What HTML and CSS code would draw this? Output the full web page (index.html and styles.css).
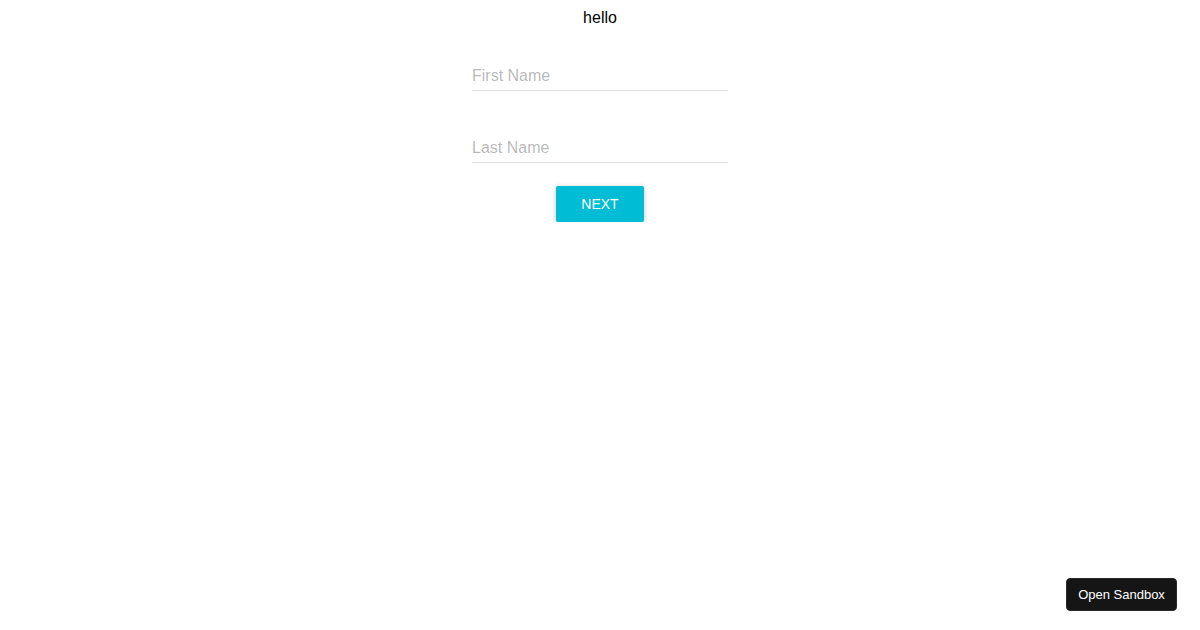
FILE: index.html
```html
<!DOCTYPE html>
<html>
<head>
<meta charset="utf-8">
<link rel="stylesheet" href="styles.css">
</head>
<body>
<div class="page">
  <div class="title">hello</div>
  <form class="form">
    <input class="field field-first" type="text" placeholder="First Name">
    <input class="field field-last" type="text" placeholder="Last Name">
    <button class="next" type="button">Next</button>
  </form>
</div>
<a class="sandbox">Open Sandbox</a>
</body>
</html>
```
FILE: styles.css
```css
html, body {
  margin: 0;
  padding: 0;
  background: #fff;
}
body {
  font-family: "Liberation Sans", Arial, sans-serif;
  color: #000;
}
.page {
  display: flex;
  flex-direction: column;
  align-items: center;
}
.title {
  margin-top: 9px;
  font-size: 16px;
  line-height: 18px;
}
.form {
  display: flex;
  flex-direction: column;
  align-items: center;
  width: 256px;
}
.field {
  display: block;
  box-sizing: border-box;
  width: 256px;
  height: 29px;
  margin: 0;
  padding: 3px 0 3px 0;
  border: none;
  border-bottom: 1px solid #e0e0e0;
  outline: none;
  background: transparent;
  font-family: "Liberation Sans", Arial, sans-serif;
  font-size: 16px;
  line-height: 22px;
  color: rgba(0,0,0,0.87);
}
.field::placeholder {
  color: rgba(0,0,0,0.3);
}
.field-first {
  margin-top: 35px;
}
.field-last {
  margin-top: 43px;
}
.next {
  margin-top: 23px;
  min-width: 88px;
  height: 36px;
  padding: 0 16px;
  border: none;
  border-radius: 2px;
  background: #00bcd4;
  color: #fff;
  font-family: "Liberation Sans", Arial, sans-serif;
  font-size: 14px;
  text-transform: uppercase;
  box-shadow: 0 1px 6px rgba(0,0,0,0.12), 0 1px 4px rgba(0,0,0,0.12);
  cursor: pointer;
}
.sandbox {
  position: fixed;
  right: 23px;
  bottom: 19px;
  box-sizing: border-box;
  width: 111px;
  height: 33px;
  display: flex;
  align-items: center;
  justify-content: center;
  background: #151515;
  border: 1px solid #2a2a2a;
  border-radius: 4px;
  color: #fff;
  font-family: "Liberation Sans", Arial, sans-serif;
  font-size: 13px;
}
```
